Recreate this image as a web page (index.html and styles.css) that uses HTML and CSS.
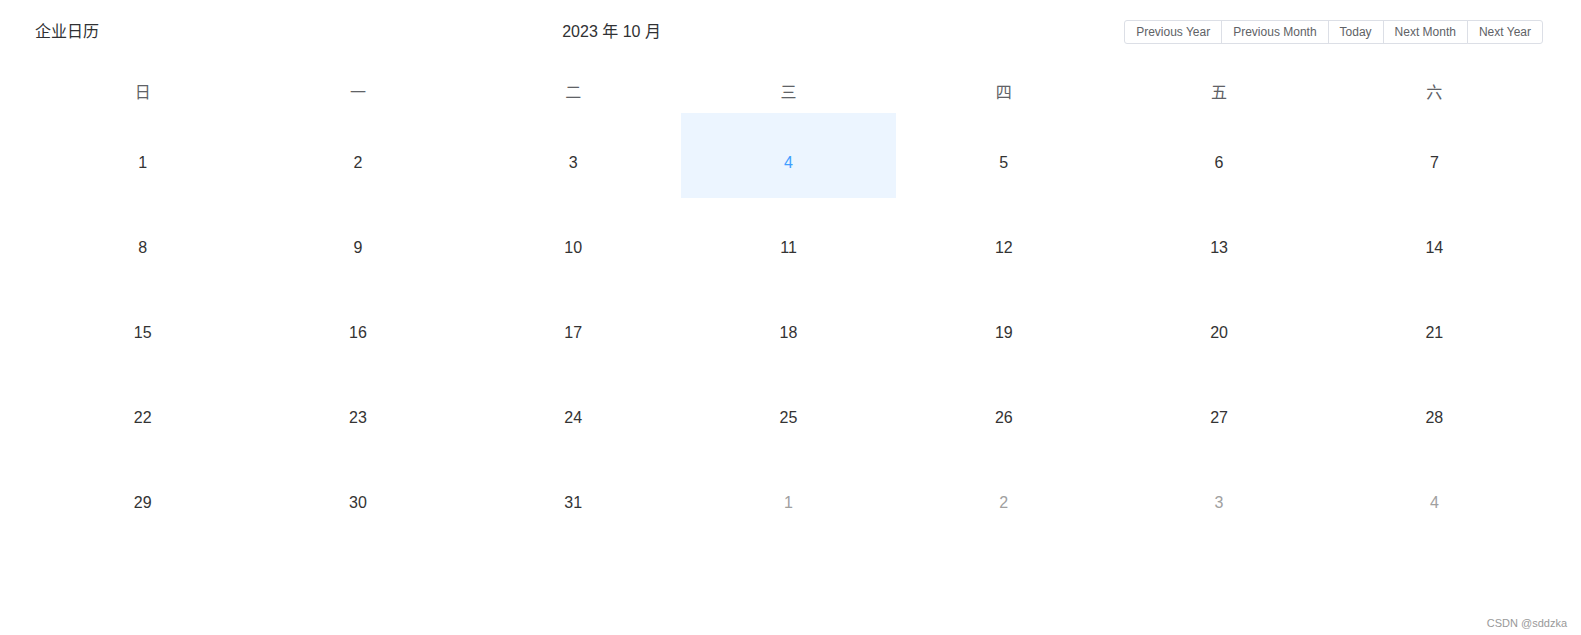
FILE: index.html
```html
<!DOCTYPE html>
<html lang="zh-CN">
<head>
<meta charset="utf-8">
<title>企业日历</title>
<link rel="stylesheet" href="styles.css">
</head>
<body>
<div class="calendar">
  <div class="cal-header">
    <div class="cal-name">企业日历</div>
    <div class="cal-title">2023 年 10 月</div>
    <div class="btn-group">
      <button class="btn">Previous Year</button>
      <button class="btn">Previous Month</button>
      <button class="btn">Today</button>
      <button class="btn">Next Month</button>
      <button class="btn">Next Year</button>
    </div>
  </div>
  <div class="cal-body">
    <div class="week-row">
      <div class="wd">日</div><div class="wd">一</div><div class="wd">二</div><div class="wd">三</div><div class="wd">四</div><div class="wd">五</div><div class="wd">六</div>
    </div>
    <div class="days">
      <div class="day">1</div><div class="day">2</div><div class="day">3</div><div class="day selected">4</div><div class="day">5</div><div class="day">6</div><div class="day">7</div>
      <div class="day">8</div><div class="day">9</div><div class="day">10</div><div class="day">11</div><div class="day">12</div><div class="day">13</div><div class="day">14</div>
      <div class="day">15</div><div class="day">16</div><div class="day">17</div><div class="day">18</div><div class="day">19</div><div class="day">20</div><div class="day">21</div>
      <div class="day">22</div><div class="day">23</div><div class="day">24</div><div class="day">25</div><div class="day">26</div><div class="day">27</div><div class="day">28</div>
      <div class="day">29</div><div class="day">30</div><div class="day">31</div><div class="day other">1</div><div class="day other">2</div><div class="day other">3</div><div class="day other">4</div>
    </div>
  </div>
</div>
<div class="watermark">CSDN @sddzka</div>
</body>
</html>
```
FILE: styles.css
```css
html, body {
  margin: 0;
  padding: 0;
  background: #fff;
}
body {
  font-family: "Liberation Sans", Arial, "Noto Sans CJK SC", sans-serif;
  color: #303133;
  height: 635px;
  position: relative;
  overflow: hidden;
}
.calendar {
  padding: 20px 39px 0 35px;
}
.cal-header {
  display: flex;
  justify-content: space-between;
  align-items: center;
  height: 24px;
  margin-right: -1px;
}
.cal-name, .cal-title {
  font-size: 16px;
  line-height: 24px;
  color: #303133;
}
.btn-group {
  display: flex;
}
.btn {
  font-family: "Liberation Sans", Arial, sans-serif;
  font-size: 12px;
  line-height: 12px;
  padding: 5px 11px;
  background: #fff;
  color: #606266;
  border: 1px solid #dcdfe6;
  margin: 0 0 0 -1px;
  border-radius: 0;
}
.btn:first-child {
  margin-left: 0;
  border-radius: 3px 0 0 3px;
}
.btn:last-child {
  border-radius: 0 3px 3px 0;
}
.cal-body {
  margin-top: 25px;
}
.week-row {
  display: grid;
  grid-template-columns: repeat(7, 1fr);
}
.wd {
  text-align: center;
  font-size: 16px;
  line-height: 20px;
  padding: 14px 0 10px;
  color: #606266;
}
.days {
  display: grid;
  grid-template-columns: repeat(7, 1fr);
  grid-auto-rows: 85px;
}
.day {
  display: flex;
  align-items: center;
  justify-content: center;
  padding-top: 15px;
  box-sizing: border-box;
  font-size: 16px;
  color: #333;
}
.day.selected {
  background: #ecf5ff;
  color: #409eff;
}
.day.other {
  color: #a0a0a0;
}
.watermark {
  position: absolute;
  right: 14px;
  bottom: 6px;
  font-size: 11px;
  color: #999;
}
```
